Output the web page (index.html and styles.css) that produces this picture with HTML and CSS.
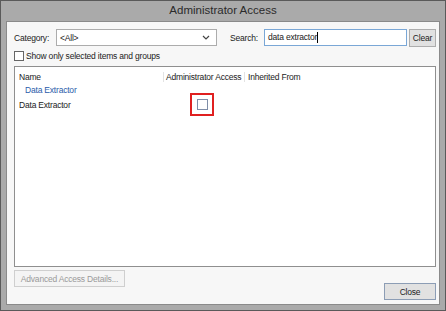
FILE: index.html
```html
<!DOCTYPE html>
<html lang="en">
<head>
    <meta charset="UTF-8">
    <title>Administrator Access</title>
    <link rel="stylesheet" href="styles.css">
</head>
<body>
    <div class="window">
        <div class="title">Administrator Access</div>
        <div class="content">
            <div class="top-row">
                <label class="lbl">Category:</label>
                <div class="select">
                    <span>&lt;All&gt;</span>
                    <svg width="8" height="6" viewBox="0 0 8 6"><path d="M1 1 L4 4 L7 1" fill="none" stroke="#444" stroke-width="1.2"/></svg>
                </div>
                <label class="lbl search-lbl">Search:</label>
                <div class="search">data extractor<span class="caret"></span></div>
                <button class="btn clear">Clear</button>
            </div>
            <div class="show-row">
                <span class="check"></span>
                <span>Show only selected items and groups</span>
            </div>
            <div class="list">
                <div class="list-head">
                    <div class="col-name">Name</div>
                    <div class="col-admin">Administrator Access</div>
                    <div class="col-inh">Inherited From</div>
                </div>
                <div class="group">Data Extractor</div>
                <div class="item">
                    <div class="col-name">Data Extractor</div>
                    <div class="col-admin">
                        <div class="highlight"><span class="check small"></span></div>
                    </div>
                    <div class="col-inh"></div>
                </div>
            </div>
            <button class="btn adv" disabled>Advanced Access Details...</button>
            <div class="bottom">
                <button class="btn close">Close</button>
            </div>
        </div>
    </div>
</body>
</html>
```

FILE: styles.css
```css
html, body {
    margin: 0;
    padding: 0;
}

body {
    width: 446px;
    height: 311px;
    font-family: "Liberation Sans", Arial, sans-serif;
    font-size: 8.5px;
    letter-spacing: -0.2px;
    color: #222;
    white-space: nowrap;
}

.window {
    box-sizing: border-box;
    width: 446px;
    height: 311px;
    background: #aaaaaa;
    border: 1px solid #5a5a5a;
    padding: 0 5px 5px 5px;
    display: flex;
    flex-direction: column;
}

.title {
    height: 20px;
    line-height: 19px;
    text-align: center;
    font-size: 11.5px;
    letter-spacing: 0;
    color: #2b2b2b;
}

.content {
    flex: 1;
    background: #f7f7f7;
    border: 1px solid #8a8a8a;
    padding: 7px 3px 0 7px;
    display: flex;
    flex-direction: column;
}

.top-row {
    display: flex;
    align-items: center;
    height: 17px;
}

.lbl {
    width: 42px;
}

.search-lbl {
    margin-left: 13px;
    width: 34px;
}

.select {
    box-sizing: border-box;
    width: 161px;
    height: 17px;
    border: 1px solid #acacac;
    background: #fff;
    display: flex;
    align-items: center;
    justify-content: space-between;
    padding: 0 6px 0 3px;
}

.search {
    box-sizing: border-box;
    width: 143px;
    height: 17px;
    border: 1px solid #7aa7d6;
    background: #fff;
    padding: 2px 3px;
    line-height: 11px;
}

.caret {
    display: inline-block;
    width: 1px;
    height: 11px;
    background: #000;
    vertical-align: top;
}

.btn {
    font-family: inherit;
    font-size: 8.5px;
    letter-spacing: -0.2px;
    color: #222;
    background: #e1e1e1;
    border: 1px solid #adadad;
    padding: 0;
}

.clear {
    width: 27px;
    height: 18px;
    margin-left: 2px;
}

.show-row {
    display: flex;
    align-items: center;
    margin-top: 4px;
    height: 12px;
}

.check {
    box-sizing: border-box;
    display: inline-block;
    width: 10px;
    height: 10px;
    border: 1px solid #666;
    background: #fff;
    margin-right: 2px;
}

.list {
    margin-top: 4px;
    box-sizing: border-box;
    height: 201px;
    border: 1px solid #8f8f8f;
    background: #fff;
}

.list-head, .item {
    display: flex;
}

.list-head {
    height: 13px;
    align-items: center;
    margin-top: 3px;
}

.col-name {
    width: 144px;
    padding-left: 4px;
}

.col-admin {
    width: 78px;
    padding-left: 2px;
}

.col-inh {
    padding-left: 3px;
}

.list-head .col-admin,
.list-head .col-inh {
    border-left: 1px solid #e3e3e3;
}

.group {
    color: #2a5caa;
    padding-left: 10px;
    height: 14px;
    line-height: 14px;
}

.item {
    height: 16px;
    align-items: center;
}

.item .col-admin {
    width: 78px;
    height: 16px;
    position: relative;
}

.highlight {
    position: absolute;
    left: 27px;
    top: -4px;
    box-sizing: border-box;
    width: 24px;
    height: 23px;
    border: 2px solid #e02020;
    display: flex;
    align-items: center;
    justify-content: center;
}

.check.small {
    width: 11px;
    height: 11px;
    border-color: #7f8ea8;
    margin: 0;
}

.adv {
    margin-top: 3px;
    width: 111px;
    height: 17px;
    color: #9a9a9a;
    background: #f4f4f4;
    border-color: #cfcfcf;
}

.bottom {
    display: flex;
    justify-content: flex-end;
    margin-top: -4px;
}

.close {
    width: 52px;
    height: 17px;
    background: #e1e1e1;
    border-color: #8c9db5;
}
```
